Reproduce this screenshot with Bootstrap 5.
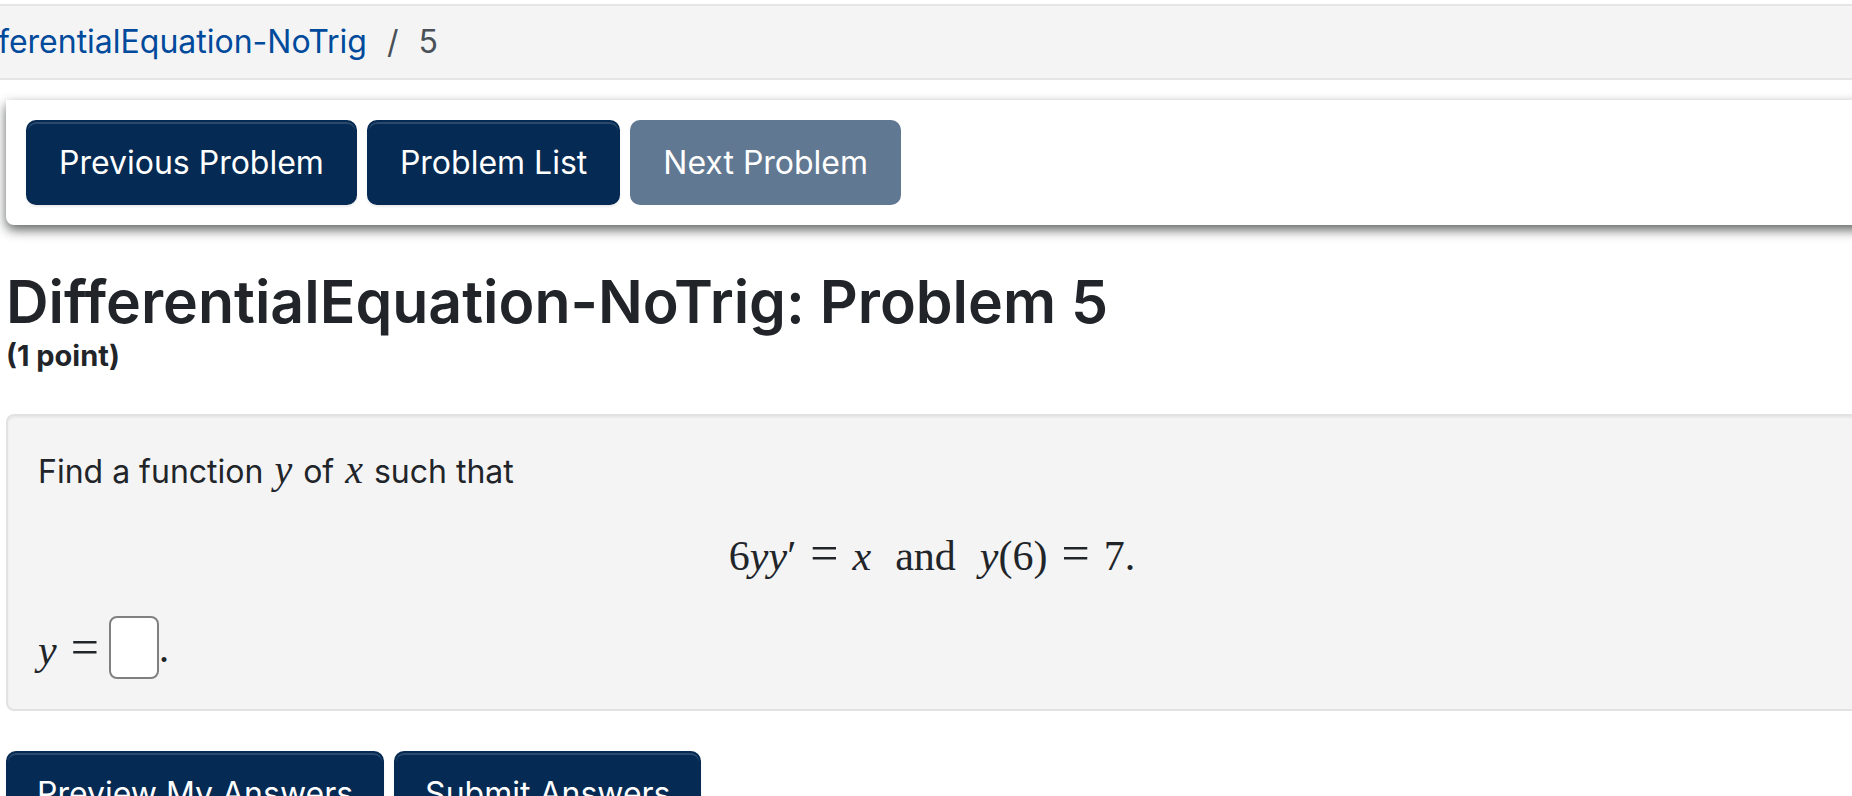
<!DOCTYPE html>
<html lang="en">
<head>
<meta charset="utf-8">
<meta name="viewport" content="width=device-width, initial-scale=1">
<title>DifferentialEquation-NoTrig: Problem 5</title>
<link href="https://cdn.jsdelivr.net/npm/bootstrap@5.3.0/dist/css/bootstrap.min.css" rel="stylesheet">
<style>
body { font-family: Inter, "Liberation Sans", sans-serif; font-size: 32px; line-height: 48px; color: #212529; overflow-x: hidden; }
.crumb-bar { margin-top: 4px; padding: 12px 0; background: #f4f4f4; border-top: 2px solid #e5e5e5; border-bottom: 2px solid #e5e5e5; overflow: hidden; }
.crumb-bar .breadcrumb { margin-left: -2px; flex-wrap: nowrap; }
.crumb-bar a { color: #004a9c; text-decoration: none; }
.crumb-bar .breadcrumb-item + .breadcrumb-item { padding-left: 20px; color: #495057; }
.crumb-bar .breadcrumb-item + .breadcrumb-item::before { padding-right: 20px; color: #495057; }
.content-area { margin: 20px -6px 0 6px; }
.nav-panel { margin-right: -20px; padding: 20px; border-radius: 0 0 8px 8px; background: #fff; box-shadow: 0 5px 12px #606562; gap: 10px; }
.btn-navy { --bs-btn-color: #fff; --bs-btn-bg: #052a53; --bs-btn-border-color: #052a53; --bs-btn-hover-color: #fff; --bs-btn-hover-bg: #041f3e; --bs-btn-disabled-color: #fff; --bs-btn-disabled-bg: #052a53; --bs-btn-disabled-border-color: #052a53; --bs-btn-disabled-opacity: .63;
  font-size: 32px; line-height: 49px; padding: 16px 31px; border-width: 2px; border-radius: 10px; box-shadow: inset 0 2px 0 rgba(255,255,255,.15), 0 2px 2px rgba(0,0,0,.075); white-space: nowrap; }
.btn-navy:disabled { box-shadow: none; }
h1 { font-size: 59px; line-height: 72px; font-weight: 600; margin: 41px 0 0; white-space: nowrap; }
.points { font-size: 29px; line-height: 36px; font-weight: 700; }
.problem-box { margin-top: 40px; padding: 30px; background: #f4f4f4; border: 2px solid #e2e2e2; border-radius: 8px; box-shadow: inset 0 2px 2px rgba(0,0,0,.05); }
.tex { font-family: "Liberation Serif", serif; font-size: 42px; line-height: 48px; }
.tex-inline { font-size: 40px; margin: 0 2px; }
.display-eq { margin: 32px 0 36px; }
.rel { margin: 0 14px; font-size: 50px; line-height: 1; }
.rel-end { margin-right: 10px; }
.word { margin: 0 24px; }
.answer { width: 50px; height: 63px; padding: 4px; border: 2px solid #808080; border-radius: 8px; background: #fff; }
.submit-row { gap: 10px; margin-top: 40px; }
.submit-row .btn-navy { padding: 16px 29px; }
</style>
<script src="https://cdn.jsdelivr.net/npm/bootstrap@5.3.0/dist/js/bootstrap.bundle.min.js"></script>
</head>
<body>
<nav class="crumb-bar d-flex align-items-center" aria-label="breadcrumb">
  <ol class="breadcrumb mb-0">
    <li class="breadcrumb-item"><a href="#">ferentialEquation-NoTrig</a></li>
    <li class="breadcrumb-item active" aria-current="page">5</li>
  </ol>
</nav>
<main class="content-area">
  <div class="nav-panel d-flex">
    <button type="button" class="btn btn-navy">Previous Problem</button>
    <button type="button" class="btn btn-navy">Problem List</button>
    <button type="button" class="btn btn-navy" disabled>Next Problem</button>
  </div>
  <h1>DifferentialEquation-NoTrig: Problem 5</h1>
  <div class="points">(1 point)</div>
  <form>
    <section class="problem-box">
      <div>Find a function <i class="tex tex-inline">y</i> of <i class="tex tex-inline">x</i> such that</div>
      <div class="display-eq tex text-center">6<i>yy</i>′<span class="rel">=</span><i>x</i><span class="word">and</span><i>y</i>(6)<span class="rel">=</span>7.</div>
      <div class="d-flex align-items-center">
        <label class="tex" for="answer"><i>y</i><span class="rel rel-end">=</span></label>
        <input class="answer" id="answer" type="text" autocomplete="off"><span class="tex">.</span>
      </div>
    </section>
    <div class="submit-row d-flex">
      <button type="button" class="btn btn-navy">Preview My Answers</button>
      <button type="submit" class="btn btn-navy">Submit Answers</button>
    </div>
  </form>
</main>
</body>
</html>
